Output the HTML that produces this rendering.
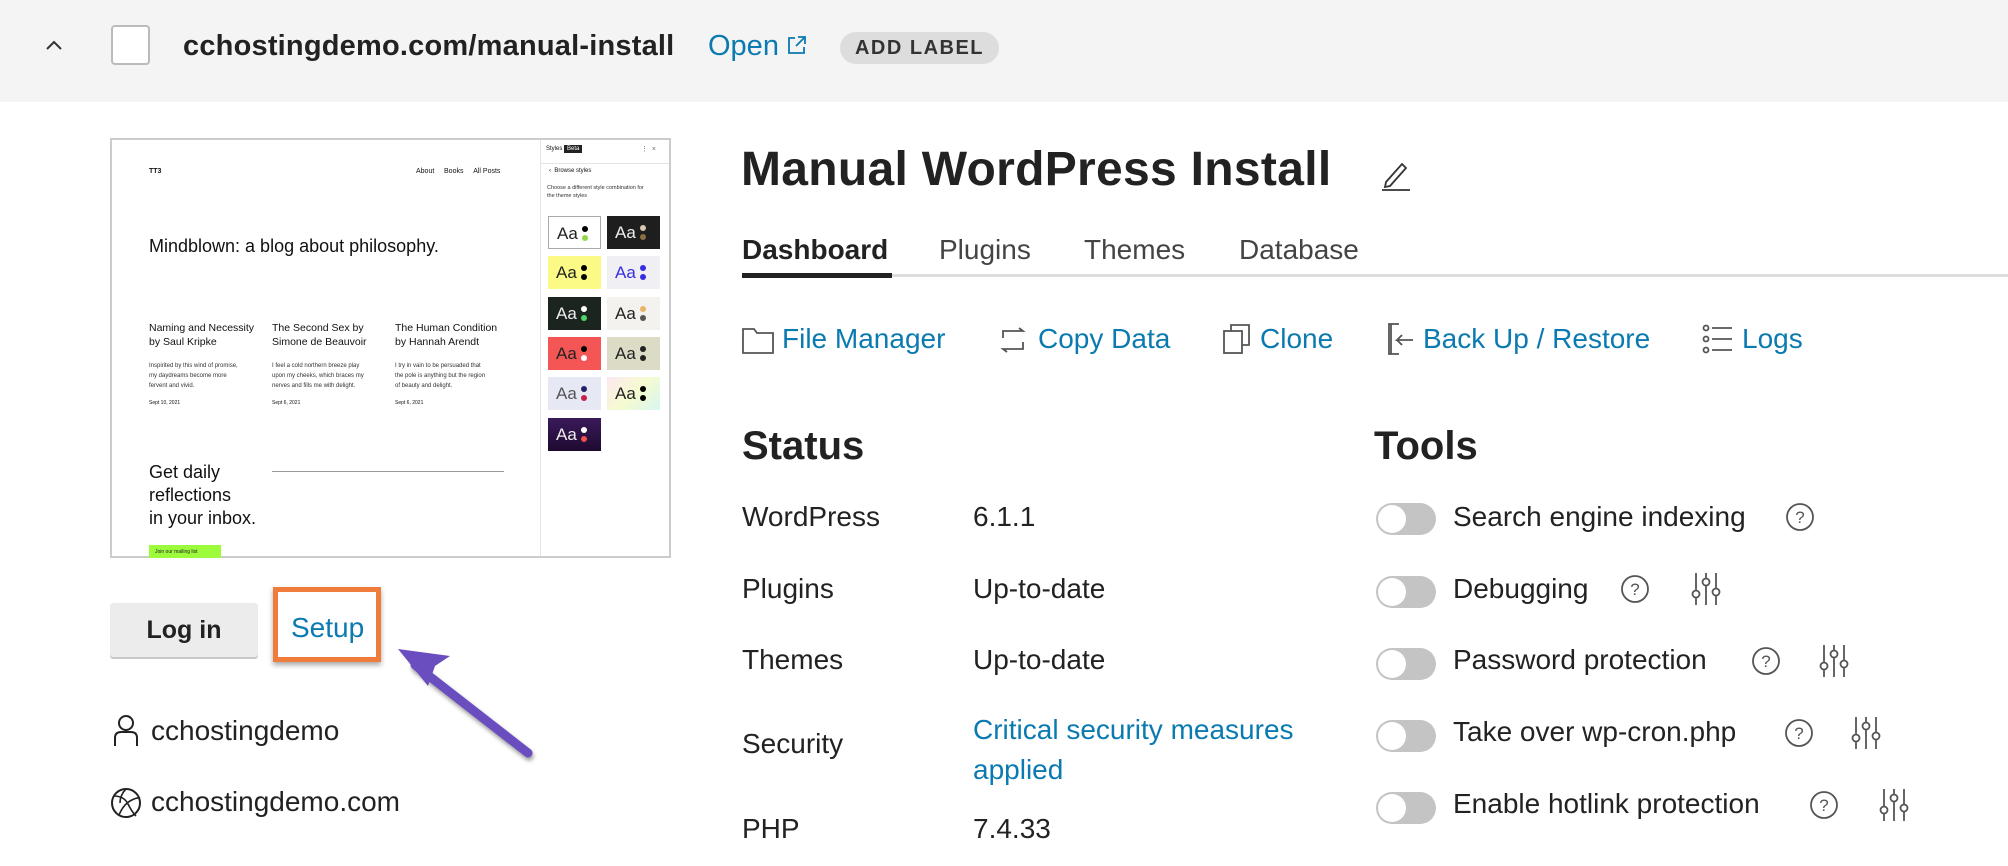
<!DOCTYPE html>
<html><head><meta charset="utf-8"><style>
*{margin:0;padding:0;box-sizing:border-box}
body{width:2008px;height:866px;background:#fff;font-family:"Liberation Sans",sans-serif;color:#222;position:relative;overflow:hidden}
.a{position:absolute;white-space:nowrap}
.blue{color:#0a7ab0}
.t{font-size:28px;line-height:1}
.th{position:absolute;font-family:"Liberation Sans",sans-serif;white-space:nowrap;color:#111}
.sw{position:absolute;width:53px;height:33px;font-family:"Liberation Sans",sans-serif;font-size:17px;line-height:33px;padding-left:8px}
.sw i{position:absolute;left:33px;width:6px;height:6px;border-radius:50%}
.tog{position:absolute;width:60px;height:32px;border-radius:16px;background:#c4c4c4;left:1376px}
.tog:after{content:"";position:absolute;left:2px;top:2px;width:28px;height:28px;border-radius:50%;background:#fff}
</style></head><body>
<div class="a" style="left:0;top:0;width:2008px;height:102px;background:#f4f4f4"></div>
<svg class="a" style="left:44px;top:38px" width="20" height="14"><path d="M3 11 L10 4 L17 11" fill="none" stroke="#333" stroke-width="2"/></svg>
<div class="a" style="left:111px;top:25px;width:39px;height:40px;border:2px solid #bbb;border-radius:4px;background:#fff"></div>
<div class="a" style="left:183px;top:30px;font-size:29px;font-weight:bold;color:#222;letter-spacing:0.2px">cchostingdemo.com/manual-install</div>
<div class="a blue" style="left:708px;top:30px;font-size:29px">Open</div>
<svg class="a" style="left:786px;top:34px" width="22" height="22"><path d="M9 4H3v15h15v-6M12 3h7v7M19 3l-9 9" fill="none" stroke="#0a7ab0" stroke-width="1.8"/></svg>
<div class="a" style="left:840px;top:32px;width:159px;height:32px;border-radius:16px;background:#ddd;font-size:20px;font-weight:bold;letter-spacing:1.5px;line-height:32px;text-align:center;color:#333">ADD LABEL</div>

<!-- thumbnail -->
<div class="a" style="left:110px;top:138px;width:561px;height:420px;border:2px solid #ccc;background:#fff;overflow:hidden">
 <div class="a" style="left:428px;top:0;width:1px;height:420px;background:#e4e4e4"></div>
 <div class="a" style="left:428px;top:23px;width:133px;height:1px;background:#e4e4e4"></div>
</div>
<div class="th" style="left:149px;top:168px;font-size:7px;font-weight:bold">TT3</div>
<div class="th" style="left:416px;top:168px;font-size:7px">About&nbsp;&nbsp;&nbsp;&nbsp;&nbsp;Books&nbsp;&nbsp;&nbsp;&nbsp;&nbsp;All Posts</div>
<div class="th" style="left:546px;top:146px;font-size:6px">Styles <span style="background:#222;color:#fff;padding:1px 3px">Beta</span></div>
<div class="th" style="left:641px;top:145px;font-size:7px;color:#666">⋮&nbsp;&nbsp;×</div>
<div class="th" style="left:549px;top:168px;font-size:6px">‹&nbsp;&nbsp;Browse styles</div>
<div class="th" style="left:547px;top:184px;font-size:5.5px;line-height:8px;color:#333">Choose a different style combination for<br>the theme styles</div>
<div class="th" style="left:149px;top:236px;font-size:18px">Mindblown: a blog about philosophy.</div>
<div class="th" style="left:149px;top:321px;font-size:10.5px;line-height:14px">Naming and Necessity<br>by Saul Kripke</div>
<div class="th" style="left:272px;top:321px;font-size:10.5px;line-height:14px">The Second Sex by<br>Simone de Beauvoir</div>
<div class="th" style="left:395px;top:321px;font-size:10.5px;line-height:14px">The Human Condition<br>by Hannah Arendt</div>
<div class="th" style="left:149px;top:361px;font-size:6px;line-height:10px;color:#333">Inspirited by this wind of promise,<br>my daydreams become more<br>fervent and vivid.</div>
<div class="th" style="left:272px;top:361px;font-size:6px;line-height:10px;color:#333">I feel a cold northern breeze play<br>upon my cheeks, which braces my<br>nerves and fills me with delight.</div>
<div class="th" style="left:395px;top:361px;font-size:6px;line-height:10px;color:#333">I try in vain to be persuaded that<br>the pole is anything but the region<br>of beauty and delight.</div>
<div class="th" style="left:149px;top:400px;font-size:5px">Sept 10, 2021</div>
<div class="th" style="left:272px;top:400px;font-size:5px">Sept 6, 2021</div>
<div class="th" style="left:395px;top:400px;font-size:5px">Sept 6, 2021</div>
<div class="th" style="left:149px;top:461px;font-size:18px;line-height:23px">Get daily<br>reflections<br>in your inbox.</div>
<div class="a" style="left:272px;top:471px;width:232px;height:1px;background:#999"></div>
<div class="a" style="left:149px;top:545px;width:72px;height:13px;background:#9cfb3b;font-size:5px;padding:4px 0 0 6px">Join our mailing list</div>
<div class="sw" style="left:548px;top:216px;background:#fff;border:1px solid #aaa">Aa<i style="top:9px;background:#000"></i><i style="top:18px;background:#8fd84a"></i></div>
<div class="sw" style="left:607px;top:216px;background:#1e1e1e;color:#eee">Aa<i style="top:9px;background:#d7c6b0"></i><i style="top:18px;background:#8b6f43"></i></div>
<div class="sw" style="left:548px;top:256px;background:#fbfa84">Aa<i style="top:9px;background:#000"></i><i style="top:18px;background:#000"></i></div>
<div class="sw" style="left:607px;top:256px;background:#f0f0f4;color:#3a2ce0">Aa<i style="top:9px;background:#3a2ce0"></i><i style="top:18px;background:#3a2ce0"></i></div>
<div class="sw" style="left:548px;top:297px;background:#1c2420;color:#eee">Aa<i style="top:9px;background:#fff"></i><i style="top:18px;background:#4fd46a"></i></div>
<div class="sw" style="left:607px;top:297px;background:#f4f2ee">Aa<i style="top:9px;background:#e8b46a"></i><i style="top:18px;background:#555"></i></div>
<div class="sw" style="left:548px;top:337px;background:#f45656">Aa<i style="top:9px;background:#000"></i><i style="top:18px;background:#fff"></i></div>
<div class="sw" style="left:607px;top:337px;background:#dcdcc6">Aa<i style="top:9px;background:#222"></i><i style="top:18px;background:#222"></i></div>
<div class="sw" style="left:548px;top:377px;background:#e6e8f4;color:#555">Aa<i style="top:9px;background:#222266"></i><i style="top:18px;background:#c4224a"></i></div>
<div class="sw" style="left:607px;top:377px;background:linear-gradient(135deg,#fde8f0,#f6fbd0,#d8f6f0)">Aa<i style="top:9px;background:#000"></i><i style="top:18px;background:#000"></i></div>
<div class="sw" style="left:548px;top:418px;background:linear-gradient(#3a1a5a,#1e0a30);color:#eee">Aa<i style="top:9px;background:#fff"></i><i style="top:18px;background:#f05050"></i></div>

<!-- left bottom -->
<div class="a" style="left:110px;top:603px;width:148px;height:54px;background:#ececec;border-radius:3px;box-shadow:0 2px 0 #c8c8c8;font-size:25px;font-weight:bold;line-height:54px;text-align:center;color:#222">Log in</div>
<div class="a" style="left:273px;top:587px;width:108px;height:75px;border:5px solid #f07c3c;box-shadow:0 3px 5px rgba(0,0,0,.35);background:#fff"></div>
<div class="a blue" style="left:291px;top:612px;font-size:28px">Setup</div>
<svg class="a" style="left:380px;top:630px" width="170" height="140"><path d="M148 123 L35 35" stroke="#6a4ec0" stroke-width="9" stroke-linecap="round" filter="drop-shadow(1px 3px 2px rgba(0,0,0,.4))"/><path d="M18 19 L70 26 L55 36 L48 56 Z" fill="#6a4ec0"/></svg>
<svg class="a" style="left:112px;top:714px" width="28" height="34"><circle cx="14" cy="9" r="7" fill="none" stroke="#222" stroke-width="2"/><path d="M3 32v-8q0-6 6-6h10q6 0 6 6v8" fill="none" stroke="#222" stroke-width="2"/></svg>
<div class="a t" style="left:151px;top:717px">cchostingdemo</div>
<svg class="a" style="left:109px;top:786px" width="34" height="34"><circle cx="17" cy="17" r="14" fill="none" stroke="#222" stroke-width="2"/><path d="M5 10q10 0 14 8t8 12M10 29q4-10 11-14t10-3M17 3q-6 6 -6 14" fill="none" stroke="#222" stroke-width="1.6"/></svg>
<div class="a t" style="left:151px;top:788px">cchostingdemo.com</div>

<!-- right -->
<div class="a" style="left:741px;top:142px;font-size:48px;font-weight:bold;color:#222;letter-spacing:0.3px">Manual WordPress Install</div>
<svg class="a" style="left:1380px;top:158px" width="32" height="34"><path d="M6 24 L22 6 L26 10 L10 28 L5 29 Z" fill="none" stroke="#333" stroke-width="1.8"/><path d="M2 32h28" stroke="#333" stroke-width="1.8"/></svg>
<div class="a" style="left:742px;top:234px;font-size:28px;font-weight:bold;color:#222">Dashboard</div>
<div class="a" style="left:939px;top:234px;font-size:28px;color:#444">Plugins</div>
<div class="a" style="left:1084px;top:234px;font-size:28px;color:#444">Themes</div>
<div class="a" style="left:1239px;top:234px;font-size:28px;color:#444">Database</div>
<div class="a" style="left:742px;top:274px;width:1266px;height:3px;background:#ddd"></div>
<div class="a" style="left:742px;top:273px;width:150px;height:5px;background:#222"></div>

<svg class="a" style="left:742px;top:326px" width="32" height="28"><path d="M1 3h11l3 4h16v20H1z" fill="none" stroke="#555" stroke-width="1.8"/></svg>
<div class="a blue t" style="left:782px;top:325px">File Manager</div>
<svg class="a" style="left:997px;top:326px" width="32" height="28"><path d="M6 12V5h20l-4-3M26 16v7H6l4 3" fill="none" stroke="#555" stroke-width="1.8"/></svg>
<div class="a blue t" style="left:1038px;top:325px">Copy Data</div>
<svg class="a" style="left:1222px;top:322px" width="30" height="34"><rect x="2" y="9" width="18" height="22" fill="none" stroke="#555" stroke-width="1.8"/><path d="M9 9V3h18v20h-7" fill="none" stroke="#555" stroke-width="1.8"/></svg>
<div class="a blue t" style="left:1260px;top:325px">Clone</div>
<svg class="a" style="left:1387px;top:322px" width="30" height="34"><path d="M12 2H2v30h10M4 2v30" fill="none" stroke="#555" stroke-width="1.8"/><path d="M26 18H10l5-5M10 18l5 5" fill="none" stroke="#555" stroke-width="1.8"/></svg>
<div class="a blue t" style="left:1423px;top:325px">Back Up / Restore</div>
<svg class="a" style="left:1702px;top:324px" width="32" height="30"><g fill="none" stroke="#555" stroke-width="1.8"><circle cx="4" cy="4" r="2.5"/><circle cx="4" cy="15" r="2.5"/><circle cx="4" cy="26" r="2.5"/><path d="M10 4h20M10 15h20M10 26h20"/></g></svg>
<div class="a blue t" style="left:1742px;top:325px">Logs</div>

<div class="a" style="left:742px;top:424px;font-size:40px;font-weight:bold;color:#222">Status</div>
<div class="a" style="left:1374px;top:424px;font-size:40px;font-weight:bold;color:#222">Tools</div>
<div class="a t" style="left:742px;top:503px">WordPress</div><div class="a t" style="left:973px;top:503px">6.1.1</div>
<div class="a t" style="left:742px;top:575px">Plugins</div><div class="a t" style="left:973px;top:575px">Up-to-date</div>
<div class="a t" style="left:742px;top:646px">Themes</div><div class="a t" style="left:973px;top:646px">Up-to-date</div>
<div class="a t" style="left:742px;top:730px">Security</div>
<div class="a t blue" style="left:973px;top:710px;line-height:40px">Critical security measures<br>applied</div>
<div class="a t" style="left:742px;top:815px">PHP</div><div class="a t" style="left:973px;top:815px">7.4.33</div>

<div class="tog" style="top:503px"></div><div class="a t" style="left:1453px;top:503px">Search engine indexing</div>
<div class="tog" style="top:576px"></div><div class="a t" style="left:1453px;top:575px">Debugging</div>
<div class="tog" style="top:648px"></div><div class="a t" style="left:1453px;top:646px">Password protection</div>
<div class="tog" style="top:720px"></div><div class="a t" style="left:1453px;top:718px">Take over wp-cron.php</div>
<div class="tog" style="top:792px"></div><div class="a t" style="left:1453px;top:790px">Enable hotlink protection</div>

<svg width="0" height="0" style="position:absolute"><defs>
<g id="q"><circle cx="15" cy="15" r="13" fill="none" stroke="#555" stroke-width="1.8"/><text x="15" y="21" text-anchor="middle" font-size="17" font-family="Liberation Sans" fill="#555">?</text></g>
<g id="s" fill="none" stroke="#555" stroke-width="1.8"><path d="M6 1v32M16 1v32M26 1v32"/><circle cx="6" cy="22" r="3.5" fill="#fff"/><circle cx="16" cy="10" r="3.5" fill="#fff"/><circle cx="26" cy="20" r="3.5" fill="#fff"/></g>
</defs></svg>
<svg class="a" style="left:1785px;top:502px" width="30" height="30"><use href="#q"/></svg>
<svg class="a" style="left:1620px;top:574px" width="30" height="30"><use href="#q"/></svg>
<svg class="a" style="left:1690px;top:572px" width="34" height="34"><use href="#s"/></svg>
<svg class="a" style="left:1751px;top:646px" width="30" height="30"><use href="#q"/></svg>
<svg class="a" style="left:1818px;top:644px" width="34" height="34"><use href="#s"/></svg>
<svg class="a" style="left:1784px;top:718px" width="30" height="30"><use href="#q"/></svg>
<svg class="a" style="left:1850px;top:716px" width="34" height="34"><use href="#s"/></svg>
<svg class="a" style="left:1809px;top:790px" width="30" height="30"><use href="#q"/></svg>
<svg class="a" style="left:1878px;top:788px" width="34" height="34"><use href="#s"/></svg>
</body></html>
